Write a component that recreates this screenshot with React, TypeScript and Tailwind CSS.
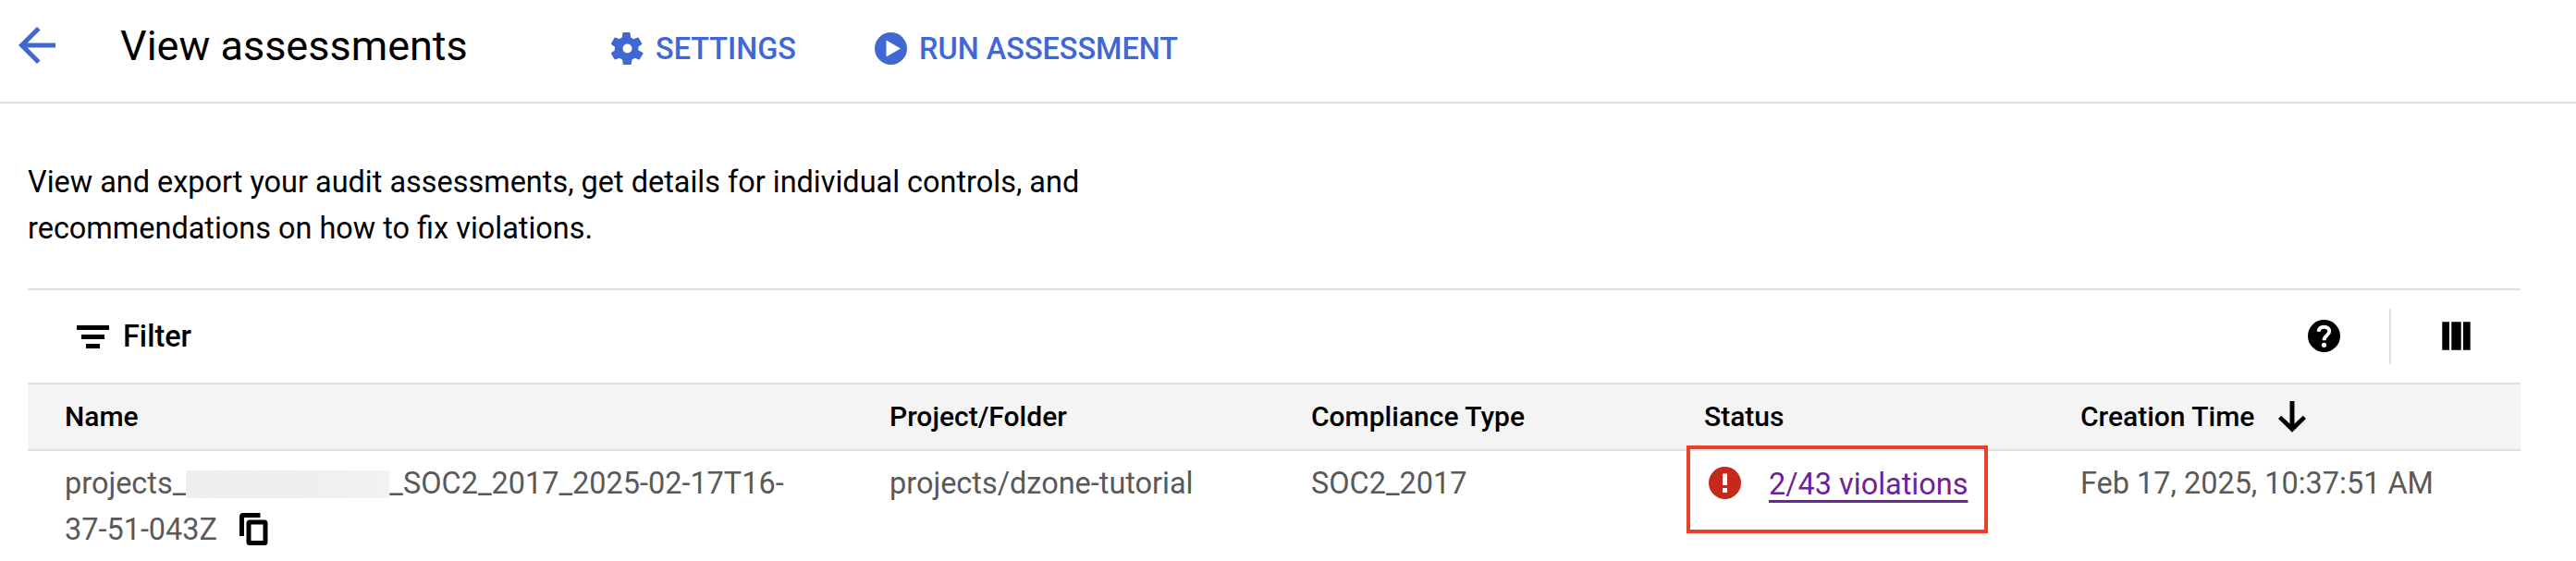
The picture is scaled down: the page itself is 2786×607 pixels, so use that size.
import { FC, ReactNode } from 'react'

interface Assessment {
  prefix: string
  suffix: string
  project: string
  compliance: string
  status: string
  created: string
}

const assessments: Assessment[] = [
  {
    prefix: 'projects_',
    suffix: '_SOC2_2017_2025-02-17T16-',
    project: 'projects/dzone-tutorial',
    compliance: 'SOC2_2017',
    status: '2/43 violations',
    created: 'Feb 17, 2025, 10:37:51 AM',
  },
]

const columns = 'grid grid-cols-[892px_456px_425px_407px_1fr] pl-10'

const BackIcon: FC = () => (
  <svg className="ml-5 size-10 shrink-0" viewBox="4 4 16 16" fill="currentColor">
    <path d="M20 11H7.83l5.59-5.59L12 4l-8 8 8 8 1.41-1.41L7.83 13H20z" />
  </svg>
)

const GearIcon: FC = () => (
  <svg className="size-[35px]" viewBox="2 2 14 14" fill="currentColor">
    <path d="M13.7 9.7c0-.2.1-.4.1-.7s0-.5-.1-.7l1.5-1.1c.2-.1.2-.3.1-.4l-1.4-2.4c-.1-.2-.3-.2-.4-.2l-1.8.7c-.4-.3-.8-.5-1.2-.7l-.3-1.9c0-.2-.2-.3-.4-.3H7.4c-.2 0-.4.1-.4.3l-.3 1.9c-.4.2-.8.4-1.2.7l-1.7-.7c-.2-.1-.4 0-.4.2L2 6.8c-.1.2-.1.3.1.4l1.5 1.1c0 .2-.1.4-.1.7s0 .5.1.7l-1.5 1.1c-.2.1-.2.3-.1.4l1.4 2.4c.1.2.3.2.4.2l1.8-.7c.4.3.8.5 1.2.7l.3 1.9c0 .2.2.3.4.3h2.8c.2 0 .4-.1.4-.3l.3-1.9c.4-.2.8-.4 1.2-.7l1.8.7c.2.1.4 0 .4-.2l1.4-2.4c.1-.2.1-.3-.1-.4zM9 11a2 2 0 1 1 0-4 2 2 0 0 1 0 4z" />
  </svg>
)

const PlayIcon: FC = () => (
  <svg className="size-[35px]" viewBox="0 0 35 35">
    <circle cx="17.5" cy="17.5" r="17.5" fill="currentColor" />
    <path d="M12.5 8.5v18l15.5-9z" fill="#fff" />
  </svg>
)

const FilterIcon: FC = () => (
  <svg className="mt-px h-[25px] w-[35px]" viewBox="0 0 35 25">
    <path d="M0 0h35v5H0zM5 10h25v5H5zM10 20h15v5H10z" />
  </svg>
)

const HelpIcon: FC = () => (
  <svg className="mb-px size-[35px]" viewBox="2 2 20 20">
    <circle cx="12" cy="12" r="10" />
    <path
      d="M8.7 9.3C8.8 7.4 10.1 6.4 12 6.4c2 0 3.3 1.100 3.300 2.800 0 2.300-3.300 2.700-3.300 5.500"
      fill="none"
      stroke="#fff"
      strokeWidth="2.2"
    />
    <circle cx="12" cy="17.6" r="1.5" fill="#fff" />
  </svg>
)

const ColumnsIcon: FC = () => (
  <svg className="mb-px h-[31px] w-[31px]" viewBox="0 0 31 31">
    <path d="M.3.3H8v30.4H.3zM10.3.3h10.4v30.4H10.3zM23 .3h7.7v30.4H23z" />
  </svg>
)

const SortIcon: FC = () => (
  <svg className="h-[34px] w-[30px]" viewBox="0 0 30 34">
    <path d="M12.500 0h5v24.500l9.300-8.700L30 19 15 33.700 0 19l3.200-3.200 9.300 8.700z" />
  </svg>
)

const CopyIcon: FC = () => (
  <svg className="ml-6 mt-[7px] h-[35px] w-[31px]" viewBox="0 0 31 35" fill="none" stroke="#000" strokeWidth="5">
    <path d="M2.5 25V4q0-1.5 1.5-1.5h18.5" />
    <rect x="10" y="10" width="18" height="22.5" rx="1" />
  </svg>
)

const ErrorIcon: FC = () => (
  <svg className="mb-px size-[35px] shrink-0" viewBox="0 0 35 35">
    <circle cx="17.5" cy="17.5" r="17.5" fill="#c5291c" />
    <path d="M15 7.5h5V20h-5zM15 23h5v5h-5z" fill="#fff" />
  </svg>
)

const ToolbarButton: FC<{ icon: ReactNode; label: string }> = ({ icon, label }) => (
  <button className="flex items-center gap-[13px] font-medium">
    {icon}
    {label}
  </button>
)

export default function App() {
  return (
    <div className="h-[607px] w-[2786px] overflow-hidden bg-white font-[Roboto,sans-serif] text-[32.45px] leading-[50px] text-black">
      <header className="flex h-28 border-b-2 border-[#e0e0e0] text-[#4167d2]">
        <div className="flex h-[98px] items-center">
          <BackIcon />
          <h1 className="ml-[70px] w-[531px] pt-0.5 text-[45px] text-black">View assessments</h1>
        </div>
        <div className="flex h-[105px] items-center gap-[85px]">
          <ToolbarButton icon={<GearIcon />} label="SETTINGS" />
          <ToolbarButton icon={<PlayIcon />} label="RUN ASSESSMENT" />
        </div>
      </header>

      <main className="ml-[30px] w-[2696px]">
        <p className="w-[1200px] pt-15">
          View and export your audit assessments, get details for individual controls, and
          recommendations on how to fix violations.
        </p>

        <div className="mt-10 flex h-[102px] items-center border-t-2 border-[#e0e0e0] pl-[53px] pr-[54px] font-medium">
          <FilterIcon />
          <span className="ml-[15px]">Filter</span>
          <div className="ml-auto flex items-center">
            <HelpIcon />
            <div className="ml-[53px] mr-[55px] h-15 w-0.5 bg-[#e0e0e0]" />
            <ColumnsIcon />
          </div>
        </div>

        <div className={`${columns} h-[74px] items-center border-y-2 border-[#e0e0e0] bg-[#f4f4f4] text-[30px] font-medium`}>
          <span>Name</span>
          <span>Project/Folder</span>
          <span>Compliance Type</span>
          <span>Status</span>
          <span className="flex items-center gap-[26px]">
            Creation Time
            <SortIcon />
          </span>
        </div>

        {assessments.map((item) => (
          <div key={item.created} className={`${columns} pt-2.5 text-[#595959]`}>
            <div>
              <div className="flex items-center">
                {item.prefix}
                <span className="mt-0.5 h-[30px] w-[220px] bg-linear-to-r from-[#efefef] via-[#eeeeee] to-[#f2f2f2]" />
                {item.suffix}
              </div>
              <div className="flex">
                37-51-043Z
                <CopyIcon />
              </div>
            </div>
            <span>{item.project}</span>
            <span>{item.compliance}</span>
            <div className="relative flex h-[50px] items-center pl-[5px]">
              <div className="absolute -left-[19px] -top-4 h-[95px] w-[326px] border-4 border-[#e94127]" />
              <ErrorIcon />
              <a
                href="#"
                className="ml-[30px] pt-0.5 text-[#70209a] underline decoration-[3px] underline-offset-[6px] [text-decoration-skip-ink:none]"
              >
                {item.status}
              </a>
            </div>
            <span>{item.created}</span>
          </div>
        ))}
      </main>
    </div>
  )
}
